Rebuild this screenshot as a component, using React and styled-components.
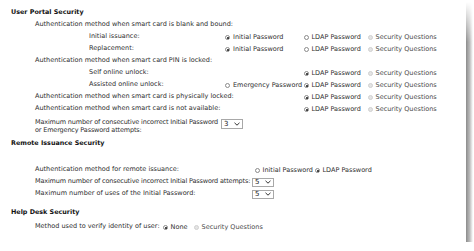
import styled, { createGlobalStyle } from 'styled-components';

const GlobalStyle = createGlobalStyle`
  * {
    margin: 0;
    padding: 0;
    box-sizing: border-box;
  }

  body {
    background: #fff;
    font-family: 'DejaVu Sans', Verdana, sans-serif;
  }
`;

const Panel = styled.div`
  position: relative;
  width: 466px;
  height: 242px;
  background: #fff;
  padding-top: 6px;

  &::after {
    content: '';
    position: absolute;
    top: 2px;
    right: -7px;
    width: 7px;
    bottom: -5px;
    background: linear-gradient(to right, #8c8c8c, #b8b8b8 50%, #fff);
    -webkit-mask-image: linear-gradient(to bottom, transparent, #000 40px);
    mask-image: linear-gradient(to bottom, transparent, #000 40px);
  }

  &::before {
    content: '';
    position: absolute;
    left: 2px;
    right: 0;
    bottom: -5px;
    height: 5px;
    background: linear-gradient(to bottom, #7c7c7c, #b8b8b8 50%, #fff);
    -webkit-mask-image: linear-gradient(to right, transparent, #000 45px);
    mask-image: linear-gradient(to right, transparent, #000 45px);
  }
`;

const Heading = styled.h3`
  height: 12px;
  line-height: 12px;
  padding-left: 11px;
  margin-top: ${(p) => p.$top || 0}px;
  font-size: 6.4px;
  font-weight: bold;
  color: #111;
`;

const Row = styled.div`
  display: flex;
  align-items: center;
  height: 12px;
  margin-top: ${(p) => p.$top || 0}px;
  font-size: 6.5px;
  color: #2e2e2e;
  white-space: nowrap;
`;

const Label = styled.div`
  flex: none;
  width: ${(p) => (p.$width ? `${p.$width}px` : 'auto')};
  padding-left: ${(p) => p.$indent}px;
  margin-right: ${(p) => p.$gap || 0}px;
  line-height: 7.5px;
  letter-spacing: ${(p) => (p.$tight ? '-0.16px' : 'normal')};
`;

const TallRow = styled(Row)`
  height: 15px;
  align-items: flex-start;
`;

const Cell = styled.div`
  flex: none;
  display: flex;
  align-items: center;
  gap: 3px;
  width: ${(p) => (p.$width ? `${p.$width}px` : 'auto')};
  margin-right: ${(p) => p.$gap || 0}px;
`;

const Radio = styled.span`
  flex: none;
  position: relative;
  width: 5px;
  height: 5px;
  border-radius: 50%;
  border: 0.6px solid ${(p) => (p.$disabled ? '#d0d0d0' : '#8a8a8a')};
  background: ${(p) => (p.$disabled ? '#e4e4e4' : '#fff')};

  &::after {
    content: '';
    display: ${(p) => (p.$checked ? 'block' : 'none')};
    position: absolute;
    left: 1px;
    top: 1px;
    width: 2px;
    height: 2px;
    border-radius: 50%;
    background: #111;
  }
`;

const OptText = styled.span`
  color: ${(p) => (p.$disabled ? '#4a4a4a' : '#2e2e2e')};
`;

const Select = styled.div`
  flex: none;
  display: flex;
  align-items: center;
  justify-content: space-between;
  width: 22px;
  height: ${(p) => p.$height || 10}px;
  padding: 0 2px 0 2px;
  border: 1px solid #a8a8a8;
  background: #fff;
  font-size: 7px;
  color: #222;
  margin-top: ${(p) => p.$top || 0}px;
`;

const Chevron = () => (
  <svg width="6" height="4" viewBox="0 0 6 4">
    <path d="M0.5 0.8 L3 3.2 L5.5 0.8" fill="none" stroke="#333" strokeWidth="1" />
  </svg>
);

const Option = ({ label, checked, disabled, width, gap }) => (
  <Cell $width={width} $gap={gap}>
    <Radio $checked={checked} $disabled={disabled} />
    <OptText $disabled={disabled}>{label}</OptText>
  </Cell>
);

const Dropdown = ({ value, top, height }) => (
  <Select $top={top} $height={height}>
    <span>{value}</span>
    <Chevron />
  </Select>
);

const threeWay = (first, checked) => (
  <>
    <Option label={first} width={78.5} checked={checked === 0} />
    <Option label="LDAP Password" width={64} checked={checked === 1} />
    <Option label="Security Questions" disabled />
  </>
);

const App = () => {
  return (
    <>
      <GlobalStyle />
      <Panel>
        <Heading>User Portal Security</Heading>
        <Row $top={1}>
          <Label $indent={35}>Authentication method when smart card is blank and bound:</Label>
        </Row>
        <Row>
          <Label $indent={89} $width={225}>Initial issuance:</Label>
          {threeWay('Initial Password', 0)}
        </Row>
        <Row>
          <Label $indent={89} $width={225}>Replacement:</Label>
          {threeWay('Initial Password', 0)}
        </Row>
        <Row>
          <Label $indent={35}>Authentication method when smart card PIN is locked:</Label>
        </Row>
        <Row>
          <Label $indent={89} $width={303.5}>Self online unlock:</Label>
          <Option label="LDAP Password" width={64} checked />
          <Option label="Security Questions" disabled />
        </Row>
        <Row>
          <Label $indent={89} $width={225}>Assisted online unlock:</Label>
          {threeWay('Emergency Password', 1)}
        </Row>
        <Row>
          <Label $indent={35} $width={303.5}>
            Authentication method when smart card is physically locked:
          </Label>
          <Option label="LDAP Password" width={64} checked />
          <Option label="Security Questions" disabled />
        </Row>
        <Row>
          <Label $indent={35} $width={303.5}>
            Authentication method when smart card is not available:
          </Label>
          <Option label="LDAP Password" width={64} checked />
          <Option label="Security Questions" disabled />
        </Row>
        <TallRow $top={4}>
          <Label $indent={35} $width={221} $tight>
            Maximum number of consecutive incorrect Initial Password
            <br />
            or Emergency Password attempts:
          </Label>
          <Dropdown value="3" top={0} />
        </TallRow>

        <Heading $top={3}>Remote Issuance Security</Heading>
        <Row $top={15}>
          <Label $indent={35} $width={254.5}>Authentication method for remote issuance:</Label>
          <Option label="Initial Password" width={60} />
          <Option label="LDAP Password" checked />
        </Row>
        <Row>
          <Label $indent={35} $width={252} $tight>
            Maximum number of consecutive incorrect Initial Password attempts:
          </Label>
          <Dropdown value="5" height={9} />
        </Row>
        <Row>
          <Label $indent={35} $width={252}>Maximum number of uses of the Initial Password:</Label>
          <Dropdown value="5" height={9} />
        </Row>

        <Heading $top={6}>Help Desk Security</Heading>
        <Row $top={3}>
          <Label $indent={35} $gap={3}>Method used to verify identity of user:</Label>
          <Option label="None" checked gap={6} />
          <Option label="Security Questions" disabled />
        </Row>
      </Panel>
    </>
  );
};

export default App;
